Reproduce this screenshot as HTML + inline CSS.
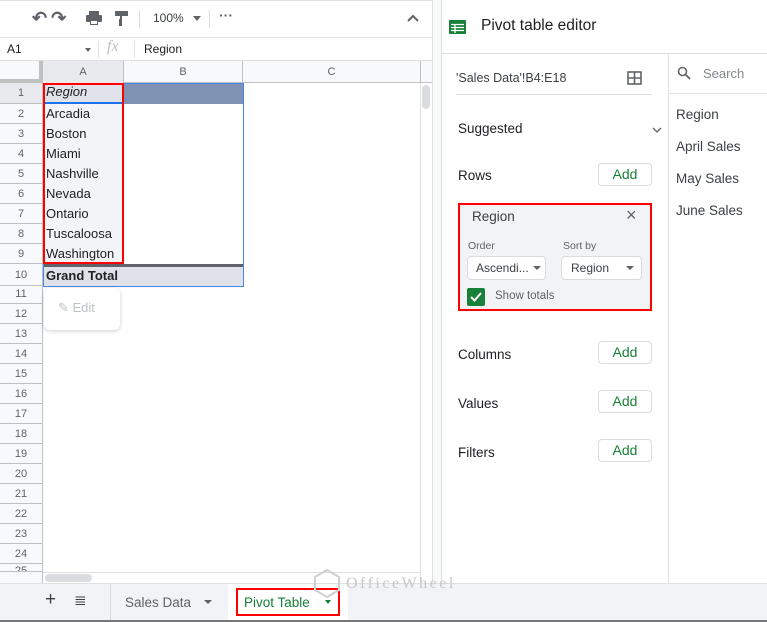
<!DOCTYPE html>
<html><head><style>
*{margin:0;padding:0;box-sizing:border-box}
body{width:767px;height:622px;overflow:hidden;background:#fff;font-family:"Liberation Sans",Arial,sans-serif;position:relative;color:#202124}
.a{position:absolute}
.rh{position:absolute;left:0;width:43px;height:20px;font-size:11px;color:#5f6368;text-align:center;line-height:20px;border-bottom:1px solid #c0c0c0;background:#f8f9fa;border-right:1px solid #c0c0c0;overflow:hidden}
.cell{position:absolute;left:46px;font-size:13px;line-height:20px}
.add{position:absolute;left:598px;width:54px;height:23px;border:1px solid #dadce0;border-radius:4px;color:#188038;font-size:14px;text-align:center;line-height:21px;background:#fff}
.lbl{position:absolute;left:458px;font-size:13.5px;color:#202124}
.fld{position:absolute;left:676px;font-size:13.5px;color:#3c4043}
</style></head><body>
<div class="a" style="left:0;top:0;width:432px;height:38px;border-bottom:1px solid #e0e0e0;border-top:1px solid #e0e0e0"></div>
<div class="a" style="left:32px;top:8px;font-size:18px;color:#5f6368;letter-spacing:4px;font-weight:bold">↶↷</div>
<svg class="a" style="left:86px;top:11px" width="16" height="14"><rect x="3" y="0" width="10" height="4" fill="#5f6368"/><rect x="0" y="4" width="16" height="7" rx="1" fill="#5f6368"/><rect x="4" y="9" width="8" height="5" fill="#5f6368"/><rect x="5" y="10" width="6" height="3" fill="#fff"/></svg>
<svg class="a" style="left:115px;top:11px" width="14" height="15"><rect x="0" y="0" width="13" height="5" fill="#5f6368"/><rect x="5" y="5" width="2" height="3" fill="#5f6368"/><rect x="4" y="8" width="3" height="7" fill="#5f6368"/></svg>
<div class="a" style="left:139px;top:10px;width:1px;height:18px;background:#dadce0"></div>
<div class="a" style="left:153px;top:11px;font-size:12px;color:#3c4043">100%</div>
<div class="a" style="left:193px;top:16px;border:4px solid transparent;border-top:5px solid #5f6368"></div>
<div class="a" style="left:209px;top:10px;width:1px;height:18px;background:#dadce0"></div>
<div class="a" style="left:219px;top:7px;font-size:14px;color:#5f6368;font-weight:bold">···</div>
<svg class="a" style="left:407px;top:14px" width="12" height="8"><path d="M1 7L6 2L11 7" stroke="#5f6368" stroke-width="2" fill="none"/></svg>
<div class="a" style="left:0;top:38px;width:432px;height:23px;border-bottom:1px solid #e0e0e0"></div>
<div class="a" style="left:7px;top:42px;font-size:12px">A1</div>
<div class="a" style="left:85px;top:48px;border:3px solid transparent;border-top:4px solid #5f6368"></div>
<div class="a" style="left:98px;top:41px;width:1px;height:17px;background:#e0e0e0"></div>
<div class="a" style="left:107px;top:38px;font-size:16px;color:#c0c0c0;font-style:italic;font-family:'Liberation Serif',serif">fx</div>
<div class="a" style="left:134px;top:41px;width:1px;height:17px;background:#e0e0e0"></div>
<div class="a" style="left:144px;top:42px;font-size:12px">Region</div>
<div class="a" style="left:0;top:61px;width:432px;height:22px;background:#f8f9fa;border-bottom:1px solid #c0c0c0"></div>
<div class="a" style="left:0;top:61px;width:43px;height:22px;border-right:4px solid #c0c0c0;border-bottom:4px solid #c0c0c0"></div>
<div class="a" style="left:43px;top:61px;width:81px;height:22px;background:#e8eaed;border-right:1px solid #c0c0c0;font-size:11px;color:#5f6368;text-align:center;line-height:22px">A</div>
<div class="a" style="left:124px;top:61px;width:119px;height:22px;border-right:1px solid #c0c0c0;font-size:11px;color:#5f6368;text-align:center;line-height:22px">B</div>
<div class="a" style="left:243px;top:61px;width:178px;height:22px;border-right:1px solid #c0c0c0;font-size:11px;color:#5f6368;text-align:center;line-height:22px">C</div>
<div class="rh" style="top:83px;height:21px;line-height:21px;background:#e8eaed">1</div>
<div class="rh" style="top:104px">2</div><div class="rh" style="top:124px">3</div><div class="rh" style="top:144px">4</div><div class="rh" style="top:164px">5</div><div class="rh" style="top:184px">6</div><div class="rh" style="top:204px">7</div><div class="rh" style="top:224px">8</div><div class="rh" style="top:244px">9</div><div class="rh" style="top:264px;height:22px;line-height:22px">10</div>
<div class="rh" style="top:286px;height:18px;line-height:17px">11</div><div class="rh" style="top:304px">12</div><div class="rh" style="top:324px">13</div><div class="rh" style="top:344px">14</div><div class="rh" style="top:364px">15</div><div class="rh" style="top:384px">16</div><div class="rh" style="top:404px">17</div><div class="rh" style="top:424px">18</div><div class="rh" style="top:444px">19</div><div class="rh" style="top:464px">20</div><div class="rh" style="top:484px">21</div><div class="rh" style="top:504px">22</div><div class="rh" style="top:524px">23</div><div class="rh" style="top:544px">24</div><div class="rh" style="top:564px;height:8px;line-height:14px">25</div>
<div class="a" style="left:0;top:572px;width:43px;height:11px;background:#f8f9fa;border-right:1px solid #c0c0c0"></div>
<div class="a" style="left:43px;top:83px;width:81px;height:181px;background:#f3f4f7"></div>
<div class="a" style="left:124px;top:84px;width:119px;height:20px;background:#7f92b3"></div>
<div class="a" style="left:43px;top:84px;width:81px;height:20px;background:#e0e3ea"></div>
<div class="a" style="left:43px;top:102px;width:81px;height:2px;background:#1a73e8"></div>
<div class="a" style="left:43px;top:264px;width:200px;height:3px;background:#5f6368"></div>
<div class="a" style="left:43px;top:267px;width:200px;height:19px;background:#dfe2e8"></div>
<div class="a" style="left:43px;top:83px;width:201px;height:204px;border:1.5px solid #4a86e8"></div>
<div class="cell" style="top:82px;font-style:italic">Region</div>
<div class="cell" style="top:104px">Arcadia</div><div class="cell" style="top:124px">Boston</div><div class="cell" style="top:144px">Miami</div><div class="cell" style="top:164px">Nashville</div><div class="cell" style="top:184px">Nevada</div><div class="cell" style="top:204px">Ontario</div><div class="cell" style="top:224px">Tuscaloosa</div><div class="cell" style="top:244px">Washington</div>
<div class="cell" style="top:266px;font-weight:bold">Grand Total</div>
<div class="a" style="left:43px;top:83px;width:81px;height:181px;border:2.5px solid #ff0000"></div>
<div class="a" style="left:44px;top:288px;width:76px;height:42px;background:#fff;border-radius:6px;box-shadow:0 1px 4px rgba(0,0,0,.2)"></div>
<div class="a" style="left:58px;top:300px;font-size:13px;color:#bdc1c6">✎ Edit</div>
<div class="a" style="left:420px;top:83px;width:12px;height:500px;background:#fff;border-left:1px solid #e0e0e0"></div>
<div class="a" style="left:422px;top:85px;width:8px;height:24px;background:#dadce0;border-radius:4px"></div>
<div class="a" style="left:43px;top:572px;width:377px;height:11px;background:#fff;border-top:1px solid #e0e0e0"></div>
<div class="a" style="left:45px;top:574px;width:47px;height:8px;background:#dadce0;border-radius:4px"></div>
<div class="a" style="left:432px;top:0;width:10px;height:583px;background:#f8f9fa;border-left:1px solid #e0e0e0;border-right:1px solid #e0e0e0"></div>
<div class="a" style="left:442px;top:53px;width:325px;height:1px;background:#dadce0"></div>
<svg class="a" style="left:449px;top:20px" width="17" height="14"><rect width="17" height="14" rx="1" fill="#188038"/><path d="M2 4.5H15M2 7.5H15M2 10.5H15M6 4V13" stroke="#fff" stroke-width="1.3"/></svg>
<div class="a" style="left:481px;top:17px;font-size:15.5px;color:#202124">Pivot table editor</div>
<div class="a" style="left:668px;top:54px;width:1px;height:529px;background:#e0e0e0"></div>
<div class="a" style="left:456px;top:71px;font-size:12.5px;color:#3c4043">'Sales Data'!B4:E18</div>
<svg class="a" style="left:627px;top:71px" width="15" height="14"><rect x="1" y="1" width="13" height="12" fill="none" stroke="#5f6368" stroke-width="1.6"/><path d="M1 7H14M7.5 1V13" stroke="#5f6368" stroke-width="1.6"/></svg>
<div class="a" style="left:456px;top:94px;width:196px;height:1px;background:#dadce0"></div>
<div class="lbl" style="top:121px">Suggested</div>
<svg class="a" style="left:652px;top:127px" width="10" height="6"><path d="M1 1L5 5L9 1" stroke="#5f6368" stroke-width="1.3" fill="none"/></svg>
<div class="lbl" style="top:168px">Rows</div><div class="add" style="top:163px">Add</div>
<div class="a" style="left:458px;top:203px;width:194px;height:108px;background:#f1f3f4;border:2.5px solid #ff0000"></div>
<div class="a" style="left:472px;top:209px;font-size:13.5px;color:#3c4043">Region</div>
<div class="a" style="left:626px;top:205px;font-size:18px;color:#5f6368">×</div>
<div class="a" style="left:468px;top:240px;font-size:10.5px;color:#5f6368">Order</div>
<div class="a" style="left:563px;top:240px;font-size:10.5px;color:#5f6368">Sort by</div>
<div class="a" style="left:467px;top:256px;width:79px;height:24px;background:#fff;border:1px solid #dadce0;border-radius:4px;font-size:12px;color:#3c4043;line-height:22px;padding-left:8px">Ascendi...</div>
<div class="a" style="left:533px;top:266px;border:4px solid transparent;border-top:4px solid #5f6368"></div>
<div class="a" style="left:561px;top:256px;width:81px;height:24px;background:#fff;border:1px solid #dadce0;border-radius:4px;font-size:12px;color:#3c4043;line-height:22px;padding-left:9px">Region</div>
<div class="a" style="left:626px;top:266px;border:4px solid transparent;border-top:4px solid #5f6368"></div>
<div class="a" style="left:467px;top:288px;width:18px;height:18px;background:#188038;border-radius:2px"></div>
<svg class="a" style="left:469px;top:291px" width="14" height="12"><path d="M2 6L5.5 9.5L12 2" stroke="#fff" stroke-width="2" fill="none"/></svg>
<div class="a" style="left:495px;top:290px;font-size:11.5px;color:#5f6368">Show totals</div>
<div class="lbl" style="top:347px">Columns</div><div class="add" style="top:341px">Add</div>
<div class="lbl" style="top:396px">Values</div><div class="add" style="top:390px">Add</div>
<div class="lbl" style="top:445px">Filters</div><div class="add" style="top:439px">Add</div>
<svg class="a" style="left:677px;top:66px" width="14" height="14"><circle cx="5.5" cy="5.5" r="4" fill="none" stroke="#5f6368" stroke-width="1.6"/><path d="M8.5 8.5L13 13" stroke="#5f6368" stroke-width="1.8"/></svg>
<div class="a" style="left:703px;top:66px;font-size:13px;color:#80868b">Search</div>
<div class="a" style="left:669px;top:93px;width:98px;height:1px;background:#e0e0e0"></div>
<div class="fld" style="top:107px">Region</div>
<div class="fld" style="top:139px">April Sales</div>
<div class="fld" style="top:171px">May Sales</div>
<div class="fld" style="top:203px">June Sales</div>
<div class="a" style="left:0;top:583px;width:767px;height:39px;background:#f1f3f4;border-top:1px solid #e0e0e0;border-bottom:2px solid #777"></div>
<div class="a" style="left:45px;top:589px;font-size:19px;color:#3c4043">+</div>
<div class="a" style="left:74px;top:591px;font-size:15px;color:#3c4043">≣</div>
<div class="a" style="left:110px;top:584px;width:1px;height:36px;background:#dadce0"></div>
<div class="a" style="left:125px;top:595px;font-size:13.5px;color:#5f6368">Sales Data</div>
<div class="a" style="left:204px;top:600px;border:4px solid transparent;border-top:4px solid #5f6368"></div>
<div class="a" style="left:228px;top:584px;width:120px;height:36px;background:#fff"></div>
<div class="a" style="left:236px;top:588px;width:104px;height:28px;border:2.5px solid #ff0000"></div>
<div class="a" style="left:244px;top:595px;font-size:13.5px;color:#188038">Pivot Table</div>
<div class="a" style="left:325px;top:600px;border:3px solid transparent;border-top:4px solid #188038"></div>
<div class="a" style="left:346px;top:575px;font-size:16px;color:#c7c7c7;letter-spacing:2.5px;font-family:'Liberation Serif',serif">OfficeWheel</div>
<svg class="a" style="left:313px;top:568px" width="28" height="30"><path d="M14 2L26 9V22L14 29L2 22V9Z" fill="none" stroke="#d0d0d0" stroke-width="2"/></svg>
</body></html>
